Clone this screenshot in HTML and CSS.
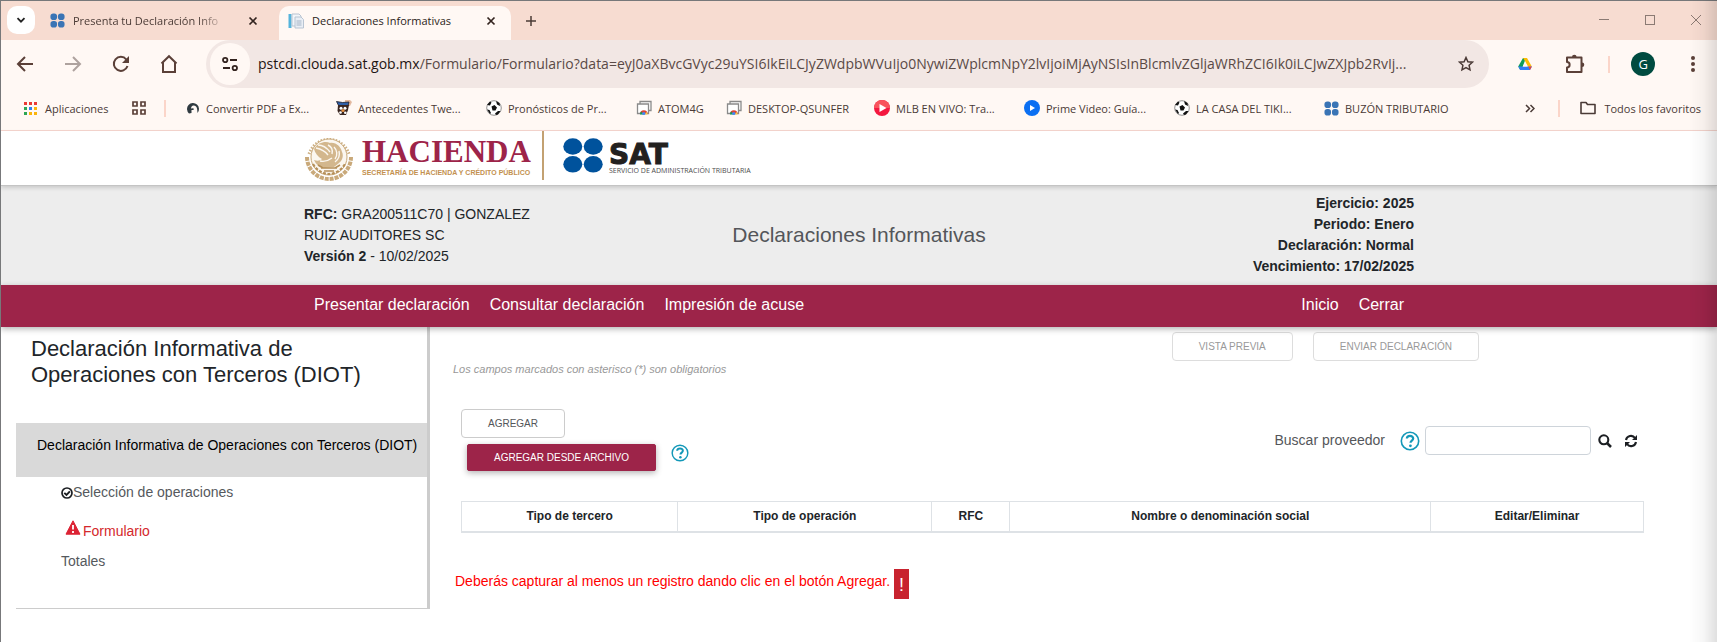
FILE: index.html
```html
<!DOCTYPE html>
<html lang="es">
<head>
<meta charset="utf-8">
<title>Declaraciones Informativas</title>
<link rel="stylesheet" href="styles.css">
</head>
<body>
<svg class="defs" aria-hidden="true">
  <symbol id="dots" viewBox="0 0 16 16"><rect x="0.5" y="0.5" width="7" height="7" rx="3"/><rect x="8.5" y="0.5" width="7" height="7" rx="3"/><rect x="0.5" y="8.5" width="7" height="7" rx="3"/><rect x="8.5" y="8.5" width="7" height="7" rx="3"/></symbol>
  <symbol id="close" viewBox="0 0 10 10"><path d="M1.500 1.500l7 7M8.500 1.500l-7 7" fill="none" stroke="currentColor" stroke-width="1.700"/></symbol>
  <symbol id="remote" viewBox="0 0 16 16"><path d="M4 3.500V1.500h11v9h-2M1.500 4h11v9.500h-11z" fill="#fff" stroke="#8a8a8a" stroke-width="1.300"/><path d="M4 14a3.800 3.800 0 0 1 7.600 0z" fill="#db4437"/><path d="M4 14.500a4 4 0 0 1 1.200-3L7.500 14.500z" fill="#0f9d58"/><path d="M11.600 14.500a4 4 0 0 0-1-2.500l-2.600 2.500z" fill="#ffcd40"/><circle cx="7.800" cy="13.500" r="1.600" fill="#4285f4"/></symbol>
  <symbol id="ball" viewBox="0 0 16 16"><circle cx="8" cy="8" r="7.300" fill="#fff" stroke="#777" stroke-width="0.800"/><path d="M5.500 6.500L8.500 5l2.500 2.500-1.500 3-3 0zM1 5l3-3.500 1.500 1L4 5.500zM10 1l3.500 2 .5 3-3-1.500zM1 9.500l2.500.5L5 13l-1 1zM9 13.500l3-2.500 2.500 0-2.500 3.500-2 .5z" fill="#111"/></symbol>
  <symbol id="help" viewBox="0 0 20 20"><circle cx="10" cy="10" r="8.700" fill="none" stroke="#1398b8" stroke-width="1.600"/><path d="M6.800 7.500c.2-1.800 1.500-2.600 3.200-2.600s3.200 1 3.200 2.600c0 2.100-2.700 2.100-2.700 4.300" fill="none" stroke="#1398b8" stroke-width="2.200"/><circle cx="10.400" cy="14.800" r="1.400" fill="#1398b8"/></symbol>
</svg>

<div class="browser">
  <div class="tabstrip">
    <button class="tabsearch" aria-label="Buscar pestañas"><svg width="10" height="10" viewBox="0 0 10 10"><path d="M1.500 3.200L5 6.700l3.500-3.500" fill="none" stroke="#222" stroke-width="1.800"/></svg></button>
    <div class="tab idle">
      <svg width="15" height="15" fill="#3a74b5"><use href="#dots"/></svg>
      <span class="tabname faded">Presenta tu Declaración Info</span>
      <button class="tabclose" aria-label="Cerrar"><svg width="10" height="10"><use href="#close"/></svg></button>
    </div>
    <div class="tab active">
      <svg width="16" height="16" viewBox="0 0 16 16"><path d="M.5 1h3v14h-3z" fill="#55b4dc"/><path d="M4 1h7l2 2v10H4z" fill="#f2f5f9" stroke="#b8c4d2"/><path d="M7 4h6l2.500 2.500V15H7z" fill="#e9eef5" stroke="#b8c4d2"/><path d="M8.500 8h5M8.500 10h5M8.500 12h5" stroke="#a5b4c6"/></svg>
      <span class="tabname">Declaraciones Informativas</span>
      <button class="tabclose" aria-label="Cerrar"><svg width="10" height="10"><use href="#close"/></svg></button>
    </div>
    <button class="newtab" aria-label="Nueva pestaña"><svg width="12" height="12" viewBox="0 0 12 12"><path d="M6 1v10M1 6h10" stroke="currentColor" stroke-width="1.500"/></svg></button>
    <div class="winctl">
      <button aria-label="Minimizar"><svg width="12" height="12" viewBox="0 0 12 12"><path d="M1 5.500h10" stroke="currentColor"/></svg></button>
      <button aria-label="Maximizar"><svg width="12" height="12" viewBox="0 0 12 12"><rect x="1.500" y="1.500" width="9" height="9" fill="none" stroke="currentColor"/></svg></button>
      <button aria-label="Cerrar ventana"><svg width="12" height="12" viewBox="0 0 12 12"><path d="M1 1l10 10M11 1L1 11" stroke="currentColor"/></svg></button>
    </div>
  </div>

  <div class="toolbar">
    <div class="nav">
      <button aria-label="Atrás"><svg width="18" height="18" viewBox="0 0 18 18"><path d="M17 9H2M9 2L2 9l7 7" fill="none" stroke="#5b4038" stroke-width="2"/></svg></button>
      <button aria-label="Adelante"><svg width="18" height="18" viewBox="0 0 18 18"><path d="M1 9h15M9 2l7 7-7 7" fill="none" stroke="#aea29e" stroke-width="2"/></svg></button>
      <button aria-label="Recargar"><svg width="18" height="18" viewBox="0 0 18 18"><path d="M15.500 11a7 7 0 1 1-1.200-6.500l1.500 2" fill="none" stroke="#5b4038" stroke-width="2"/><path d="M17 1v7h-7z" fill="#5b4038"/></svg></button>
      <button aria-label="Inicio"><svg width="18" height="20" viewBox="0 0 18 20"><path d="M1.500 9.500L9 2.200l7.500 7.300M3 8.500V18h12V8.500" fill="none" stroke="#5b4038" stroke-width="2"/></svg></button>
    </div>
    <div class="omnibox">
      <span class="siteinfo"><svg width="16" height="16" viewBox="0 0 16 16"><g fill="none" stroke="#33231f" stroke-width="1.800"><circle cx="3.200" cy="4" r="2.200"/><path d="M8 4h7M1 12h7"/><circle cx="12.800" cy="12" r="2.200"/></g></svg></span>
      <span class="url"><b>pstcdi.clouda.sat.gob.mx</b>/Formulario/Formulario?data=eyJ0aXBvcGVyc29uYSI6IkEiLCJyZWdpbWVuIjo0NywiZWplcmNpY2lvIjoiMjAyNSIsInBlcmlvZGljaWRhZCI6Ik0iLCJwZXJpb2RvIj...</span>
      <svg class="star" width="16" height="16" viewBox="0 0 16 16"><path d="M8 1.500l1.900 4.200 4.600.5-3.400 3.100.9 4.500L8 11.500l-4 2.300.9-4.500L1.500 6.200l4.600-.5z" fill="none" stroke="#4a3a36" stroke-width="1.500"/></svg>
    </div>
    <div class="actions">
      <svg class="drive" width="14" height="14" viewBox="0 0 14 14"><path d="M5 1h2l-.2 3L3.500 13H2.200L.2 9.500z" fill="#0f9d58"/><path d="M5 1h4l4.800 8.500H10L7 4z" fill="#fbbc04"/><path d="M.2 9.500H14L12 13H2.200z" fill="#2f7df6"/><path d="M10.200 9.500h3.600L12 13z" fill="#ea4335"/><path d="M7 5.500l2.300 4H4.700z" fill="#fff8f4"/></svg>
      <svg class="puzzle" width="21" height="21" viewBox="0 0 21 21"><path d="M2 3.500h14.500v14.500H2v-4.500c3.500 0 3.500-5.500 0-5.500z" fill="none" stroke="#5b4038" stroke-width="2" stroke-linejoin="round"/><path d="M7 3a2.300 2.300 0 0 1 4.600 0zM17 8.500a2.300 2.300 0 0 1 0 4.600z" fill="#5b4038"/></svg>
      <i class="sep"></i>
      <button class="avatar">G</button>
      <button class="kebab" aria-label="Menú"><svg width="4" height="18" viewBox="0 0 4 18" fill="#5b4038"><circle cx="2" cy="3" r="2"/><circle cx="2" cy="9" r="2"/><circle cx="2" cy="15" r="2"/></svg></button>
    </div>
  </div>

  <div class="bookmarks">
    <a class="bm apps" href="#"><svg width="13" height="13" viewBox="0 0 13 13"><path d="M0 0h3v3H0zM5 0h3v3H5zM10 0h3v3h-3z" fill="#ea3a33"/><path d="M0 5h3v3H0zM0 10h3v3H0z" fill="#2da653"/><path d="M5 5h3v3H5z" fill="#2f80ed"/><path d="M10 5h3v3h-3zM5 10h3v3H5zM10 10h3v3h-3z" fill="#fbb40b"/></svg><span>Aplicaciones</span></a>
    <svg width="14" height="14" viewBox="0 0 14 14"><path d="M1 1h4v4H1zM9 1h4v4H9zM1 9h4v4H1zM9 9h4v4H9z" fill="none" stroke="#5b4038" stroke-width="1.700"/></svg>
    <i class="sep first"></i>
    <a class="bm slot" href="#"><svg width="14" height="14" viewBox="0 0 14 14"><path d="M3 12.500A6 6 0 1 1 11.500 12l-.3-3.500C11 6 9.500 4.500 7.500 4.500 6 4.500 5 6 5 7.500L7 7.300c1 0 1 1.700 0 1.700H5.500V12z" fill="#2f3a40"/></svg><span>Convertir PDF a Ex...</span></a>
    <a class="bm slot" href="#"><svg width="16" height="16" viewBox="0 0 16 16"><path d="M9 0h5l2 2-2 4H9z" fill="#e3b9a0"/><path d="M.5 1.500l6 1L13 2l-1 4-9 .5z" fill="#2f5fa8" stroke="#1d1d28" stroke-width="0.800"/><path d="M2 5h11l-1 5-2 5H4L1.500 11z" fill="#3a2620"/><circle cx="5" cy="8.300" r="1.500" fill="#fff"/><circle cx="9" cy="8.300" r="1.500" fill="#fff"/><circle cx="7" cy="10.500" r="1.600" fill="#e89040"/><circle cx="4.500" cy="12.500" r="1.300" fill="#fff"/><circle cx="9.300" cy="12.700" r="1.300" fill="#fff"/></svg><span>Antecedentes Twe...</span></a>
    <a class="bm slot" href="#"><svg width="16" height="16"><use href="#ball"/></svg><span>Pronósticos de Pr...</span></a>
    <a class="bm atom" href="#"><svg width="16" height="16"><use href="#remote"/></svg><span>ATOM4G</span></a>
    <a class="bm desk" href="#"><svg width="16" height="16"><use href="#remote"/></svg><span>DESKTOP-QSUNFER</span></a>
    <a class="bm slot" href="#"><svg width="16" height="16" viewBox="0 0 16 16"><circle cx="8" cy="8" r="8" fill="#f4173f"/><path d="M0 8a8 8 0 0 1 16 0z" fill="#f8545d"/><path d="M5.500 4v8l7-4z" fill="#fff"/></svg><span>MLB EN VIVO: Tra...</span></a>
    <a class="bm slot" href="#"><svg width="16" height="16" viewBox="0 0 16 16"><circle cx="8" cy="8" r="8" fill="#0b6ff2"/><path d="M6 5v6l5-3z" fill="#fff"/></svg><span>Prime Video: Guía...</span></a>
    <a class="bm slot" href="#"><svg width="16" height="16"><use href="#ball"/></svg><span>LA CASA DEL TIKI...</span></a>
    <a class="bm slot" href="#"><svg width="15" height="15" fill="#3a74b5"><use href="#dots"/></svg><span>BUZÓN TRIBUTARIO</span></a>
    <button class="more" aria-label="Más favoritos"><svg width="10" height="9" viewBox="0 0 10 9"><path d="M1 1l3.500 3.500L1 8M5.500 1L9 4.500 5.500 8" fill="none" stroke="#4a3a36" stroke-width="1.500"/></svg></button>
    <i class="sep"></i>
    <a class="bm all" href="#"><svg width="16" height="14" viewBox="0 0 16 14"><path d="M1 1.500h5l1.500 2H15v9H1z" fill="none" stroke="#4a3a36" stroke-width="1.600" stroke-linejoin="round"/></svg><span>Todos los favoritos</span></a>
  </div>
</div>

<div class="page">
  <header class="brand">
    <div class="container logos">
      <svg class="seal" width="50" height="50" viewBox="0 0 50 50">
        <path d="M5 21a21 21 0 0 1 40 0" fill="none" stroke="#cdb084" stroke-width="3" stroke-dasharray="1.500 1.500"/>
        <path d="M3 24a22 22 0 0 0 44 0" fill="none" stroke="#c9a97a" stroke-width="4" stroke-dasharray="4 1"/>
        <circle cx="25" cy="24" r="18" fill="#fbf7f0" stroke="#c9a97a"/>
        <path d="M10 16c4-7 12-8 16-6 6-1 11 4 12 9 2 4 0 9-3 11l-5 4-9 1c-6 0-9-4-11-8 3 1 6 1 8-1-4-2-7-6-8-10z" fill="#d3b78d"/>
        <path d="M12 15c5 1 9 3 12 7M14 12c5 0 9 3 12 7M24 12c4 2 5 5 4 9M30 14c3 3 4 8 1 12M35 18c1 4 0 8-4 11M16 28c4 1 8 0 12-3" fill="none" stroke="#fbf7f0" stroke-width="1.400"/>
        <path d="M9 31c4 7 11 10 16 10s12-3 16-10" fill="none" stroke="#b58f58" stroke-width="2.200" stroke-dasharray="3 1.500"/>
        <path d="M17 35h16M20 38h10M14 32l5 3M36 32l-5 3" stroke="#b58f58" stroke-width="1.500"/>
      </svg>
      <div class="hacienda"><span class="word">HACIENDA</span><span class="sub">SECRETARÍA DE HACIENDA Y CRÉDITO PÚBLICO</span></div>
      <i class="rule"></i>
      <svg class="satdots" width="40" height="35" viewBox="0 0 40 35" fill="#00529c"><ellipse cx="9.800" cy="8.500" rx="9.500" ry="8.300"/><ellipse cx="30.200" cy="8.500" rx="9.500" ry="8.300"/><ellipse cx="9.800" cy="26.300" rx="9.500" ry="8.300"/><ellipse cx="30.200" cy="26.300" rx="9.500" ry="8.300"/></svg>
      <div class="sat"><span class="word">SAT</span><span class="sub">SERVICIO DE ADMINISTRACIÓN TRIBUTARIA</span></div>
    </div>
  </header>

  <section class="summary">
    <div class="container cols">
      <p class="taxpayer"><b>RFC:</b> GRA200511C70 | GONZALEZ RUIZ AUDITORES SC<br><b>Versión 2</b> - 10/02/2025</p>
      <h1>Declaraciones Informativas</h1>
      <p class="period">Ejercicio: 2025<br>Periodo: Enero<br>Declaración: Normal<br>Vencimiento: 17/02/2025</p>
    </div>
  </section>

  <nav class="menu">
    <div class="container links">
      <a href="#">Presentar declaración</a><a href="#">Consultar declaración</a><a href="#">Impresión de acuse</a>
      <a class="push" href="#">Inicio</a><a href="#">Cerrar</a>
    </div>
  </nav>

  <div class="body">
    <aside class="side">
      <h2>Declaración Informativa de Operaciones con Terceros (DIOT)</h2>
      <div class="group">Declaración Informativa de Operaciones con Terceros (DIOT)</div>
      <ul>
        <li><a href="#"><svg width="12" height="12" viewBox="0 0 12 12"><circle cx="6" cy="6" r="5" fill="none" stroke="#1c1f23" stroke-width="1.700"/><path d="M3.300 5.800l2.200 2.200 3.400-3.600" fill="none" stroke="#1c1f23" stroke-width="1.900"/></svg>Selección de operaciones</a></li>
        <li class="warn"><a href="#"><svg width="16" height="15" viewBox="0 0 16 15"><path d="M8 .8l7 13.400H1z" fill="#dc2334" stroke="#dc2334" stroke-linejoin="round"/><path d="M8 5v4.500M8 11v2" stroke="#fff" stroke-width="1.800"/></svg>Formulario</a></li>
        <li><a href="#">Totales</a></li>
      </ul>
    </aside>

    <main class="main">
      <div class="top"><button class="btn dim">VISTA PREVIA</button><button class="btn dim">ENVIAR DECLARACIÓN</button></div>
      <p class="note">Los campos marcados con asterisco (*) son obligatorios</p>
      <div class="tools">
        <div class="add">
          <button class="btn">AGREGAR</button>
          <div class="file"><button class="btn primary">AGREGAR DESDE ARCHIVO</button><svg width="18" height="18"><use href="#help"/></svg></div>
        </div>
        <div class="search">
          <label for="prov">Buscar proveedor</label>
          <svg class="h" width="20" height="20"><use href="#help"/></svg>
          <input id="prov" type="text">
          <button class="ico" aria-label="Buscar"><svg width="14" height="14" viewBox="0 0 14 14"><circle cx="5.800" cy="5.800" r="4.500" fill="none" stroke="#1c1f23" stroke-width="2.100"/><path d="M9 9l4 4" stroke="#1c1f23" stroke-width="2.500"/></svg></button>
          <button class="ico" aria-label="Actualizar"><svg width="14" height="14" viewBox="0 0 14 14"><path d="M2 6a5 5 0 0 1 9-2M12 8a5 5 0 0 1-9 2" fill="none" stroke="#1c1f23" stroke-width="2.100"/><path d="M13 1v5H8zM1 13V8h5z" fill="#1c1f23"/></svg></button>
        </div>
      </div>
      <table>
        <thead><tr><th class="c1">Tipo de tercero</th><th class="c2">Tipo de operación</th><th class="c3">RFC</th><th class="c4">Nombre o denominación social</th><th class="c5">Editar/Eliminar</th></tr></thead>
      </table>
      <p class="error">Deberás capturar al menos un registro dando clic en el botón Agregar.<span class="bang">!</span></p>
    </main>
  </div>
</div>
<div class="edge"></div>
</body>
</html>
```
FILE: styles.css
```css
* { box-sizing: border-box; }
html { height: 100%; }
body { margin: 0; min-height: 100%; border-top: 1px solid #77787a; border-left: 1px solid #77787a; background: #fff; color: #212529; font-family: "Liberation Sans", Arial, sans-serif; font-size: 14px; line-height: 21px; }
button { border: 0; padding: 0; background: none; font: inherit; color: inherit; display: flex; align-items: center; justify-content: center; }
a { color: inherit; text-decoration: none; }
p, h1, h2, ul { margin: 0; padding: 0; font-weight: normal; list-style: none; }
svg { display: block; flex: none; }
.defs { position: absolute; width: 0; height: 0; }

.browser { background: #fff8f4; border-bottom: 1px solid #f6d6cf; font-family: "Open Sans", "Noto Sans", sans-serif; font-size: 12px; color: #4a3a36; }
.tabstrip { display: flex; align-items: flex-end; height: 39px; background: #f7dcd1; color: #4b3b36; }
.tabsearch { width: 28px; height: 28px; margin: 0 6px 6px; border-radius: 10px; background: #fff; }
.tab { display: flex; align-items: center; width: 238px; height: 34px; padding: 0 15px 5px 9px; gap: 8px; }
.tab.idle { padding-right: 21px; }
.tab.active { width: 232px; background: #fff8f4; border-radius: 10px 10px 0 0; color: #2b1d19; }
.tabname { flex: 1; white-space: nowrap; font-size: 11px; }
.faded { mask-image: linear-gradient(to right, #000 75%, transparent 92%); }
.tabclose { color: #33241f; }
.newtab { width: 28px; height: 34px; margin-left: 6px; padding-bottom: 5px; }
.winctl { display: flex; gap: 34px; margin: 0 15px 0 auto; height: 40px; color: #8b7a73; }
.toolbar { display: flex; align-items: center; height: 48px; }
.nav { display: flex; align-items: center; width: 205px; padding-left: 15px; gap: 30px; flex: none; }
.omnibox { flex: 1; min-width: 0; display: flex; align-items: center; height: 48px; padding: 0 15px 0 4px; border-radius: 24px; background: #f2e7e4; }
.siteinfo { flex: none; display: flex; align-items: center; justify-content: center; width: 40px; height: 42px; border-radius: 20px; background: #fff8f4; }
.url { flex: 1; min-width: 0; margin: 0 8px; padding-bottom: 2px; overflow: hidden; white-space: nowrap; font-size: 14px; color: #5a4a46; }
.url b { font-weight: normal; color: #1f1513; }
.actions { display: flex; align-items: center; width: 228px; padding: 0 22px 0 29px; justify-content: space-between; flex: none; }
.drive { margin-right: 11px; }
.sep { flex: none; width: 2px; height: 17px; background: #fbd5c9; }
.avatar { width: 24px; height: 24px; border-radius: 12px; background: #004b40; color: #fff; font-size: 13px; margin-right: 14px; }
.bookmarks { display: flex; align-items: center; height: 42px; padding: 0 16px 2px 23px; font-size: 11px; }
.bm { display: flex; align-items: center; gap: 6px; white-space: nowrap; flex: none; }
.apps { width: 108px; gap: 8px; }
.first { margin: 0 20px 0 18px; }
.slot { width: 150px; }
.atom { width: 90px; }
.desk { width: 148px; }
.more { margin: 0 23px 0 auto; }
.all { margin-left: 20px; gap: 8px; }

.container { max-width: 1110px; margin: 0 auto; }
.page .container { position: relative; }
.brand { position: relative; height: 55px; border-bottom: 1px solid #c4c4c4; box-shadow: 0 2px 4px rgba(0,0,0,.15); }
.logos { display: flex; align-items: flex-start; }
.seal { margin: 2px 8px 0 0; }
.hacienda { width: 175px; flex: none; display: flex; flex-direction: column; color: #9d2449; white-space: nowrap; }
.hacienda .word { margin-top: 5px; font: bold 31px/31px "Liberation Serif", serif; }
.hacienda .sub { font: bold 7px/11px "Liberation Sans", sans-serif; color: #c3914f; }
.rule { width: 2px; height: 49px; margin: 0 19px 0 5px; background: #c3a172; }
.satdots { margin-top: 7px; }
.sat { margin: 12px 0 0 6px; display: flex; flex-direction: column; white-space: nowrap; color: #23211f; }
.sat .word { font: bold 28px/23px "DejaVu Sans", sans-serif; -webkit-text-stroke: 1px #23211f; }
.sat .sub { font: 7px/9px "Open Sans", sans-serif; color: #4c4c4c; }

.summary { background: #ededed; }
.cols { display: grid; grid-template-columns: 1fr 2fr 1fr; align-items: center; padding: 7px 0 8px; }
.taxpayer { max-width: 240px; }
.cols h1 { text-align: center; font-size: 21px; line-height: 26px; color: #54565a; }
.period { text-align: right; font-weight: bold; }
.menu { position: relative; background: #9d2449; color: #fff; font-size: 16px; box-shadow: 0 2px 6px rgba(0,0,0,.3); }
.links { display: flex; gap: 20px; padding: 9px 10px 12px; }
.push { margin-left: auto; }

.body { display: grid; grid-template-columns: 25% 1fr; gap: 23px; }
.side { height: 282px; margin-left: 15px; border-right: 3px solid #ccc; border-bottom: 1px solid #ccc; }
.side h2 { padding: 9px 40px 35px 15px; font-size: 22px; line-height: 26px; }
.group { height: 54px; padding: 12px 0 0 21px; background: #d9d9d9; color: #000; white-space: nowrap; }
.side ul { padding: 5px 0 0 45px; color: #55595d; }
.side li { margin-bottom: 8px; }
.side li a { display: flex; align-items: center; }
.side .warn { color: #d4282c; padding: 9px 0 0 4px; }
.warn svg { margin: 0 2px 8px 0; }

.main { padding: 5px 73px 0 0; }
.btn { height: 29px; padding: 0 26px; border: 1px solid #ccc; border-radius: 4px; font-size: 10px; color: #54565a; }
.dim { color: #999; border-color: #ddd; }
.top { display: flex; justify-content: flex-end; gap: 20px; padding-right: 165px; }
.note { font-size: 11px; line-height: 17px; font-style: italic; color: #999; }
.tools { display: flex; justify-content: space-between; padding: 31px 0 0 8px; }
.add { display: flex; flex-direction: column; align-items: flex-start; }
.file { display: flex; align-items: flex-start; gap: 15px; margin: 6px 0 0 6px; }
.primary { height: 27px; background: #9d2449; border-color: #9d2449; color: #fff; border-radius: 2px; box-shadow: 0 2px 6px rgba(0,0,0,.3); }
.search { display: flex; align-items: center; align-self: flex-start; margin-top: 17px; padding-right: 6px; color: #54565a; }
.search .h { margin: 0 5px 0 15px; }
.search input { width: 166px; height: 29px; border: 1px solid #ced4da; border-radius: 4px; margin-right: 7px; padding: 0 8px; font: inherit; }
.ico + .ico { margin-left: 12px; }
table { width: calc(100% - 8px); margin: 30px 0 0 8px; border-collapse: collapse; table-layout: fixed; font-size: 12px; line-height: 18px; }
th { border: 1px solid #dee2e6; border-bottom-width: 2px; padding: 5px 0 6px; }
.c1 { width: 18.3%; }
.c2 { width: 21.5%; }
.c3 { width: 6.6%; }
.c4 { width: 35.6%; }
.error { display: flex; align-items: center; margin: 30px 0 0 2px; color: #f00; }
.bang { margin: 6px 0 0 4px; width: 15px; height: 30px; background: #c8232f; color: #fff; font-size: 18px; line-height: 32px; text-align: center; }
.edge { position: fixed; top: 0; right: 0; bottom: 0; width: 28px; background: linear-gradient(to right, transparent, rgba(0,0,0,.03) 50%, rgba(0,0,0,.12)); pointer-events: none; }
```
